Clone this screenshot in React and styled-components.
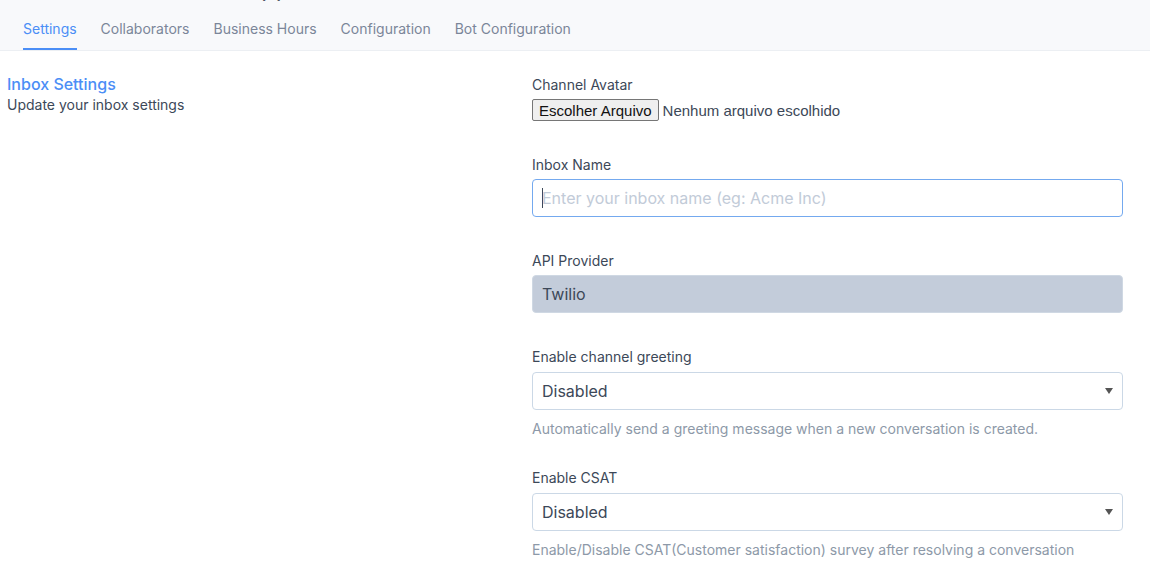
import styled, { createGlobalStyle } from 'styled-components';

const GlobalStyle = createGlobalStyle`
  body {
    margin: 0;
    background: #ffffff;
    font-family: Inter, Roboto, "Liberation Sans", sans-serif;
    color: #3c4858;
  }
  * { box-sizing: border-box; }
`;

const Header = styled.header`
  background: #f8f9fb;
  border-bottom: 1px solid #eceff3;
  padding: 0 23px;
  overflow: hidden;
`;

const Title = styled.h1`
  margin: -27px 0 0;
  font-size: 24px;
  line-height: 29px;
  font-weight: 400;
  color: #1f2d3d;
  white-space: nowrap;
`;

const Tabs = styled.nav`
  display: flex;
  gap: 24px;
  margin-top: 9px;
`;

const Tab = styled.a`
  font-size: 14px;
  line-height: 20px;
  padding: 8px 0 9px;
  color: ${p => (p.$active ? '#4b8ef6' : '#7b8699')};
  border-bottom: 2px solid ${p => (p.$active ? '#4b8ef6' : 'transparent')};
  cursor: pointer;
`;

const Body = styled.main`
  display: grid;
  grid-template-columns: 525px 591px;
  padding: 25px 0 0 7px;
`;

const Intro = styled.div`
  margin-top: -2px;
`;

const IntroTitle = styled.h2`
  margin: 0;
  font-size: 16px;
  line-height: 20px;
  font-weight: 500;
  color: #4b8ef6;
`;

const IntroText = styled.p`
  margin: 1px 0 0;
  font-size: 14px;
  line-height: 20px;
  color: #3c4858;
`;

const Form = styled.div`
  display: flex;
  flex-direction: column;
`;

const Field = styled.div`
  display: flex;
  flex-direction: column;
  margin-bottom: ${p => p.$gap || 35}px;
`;

const Label = styled.label`
  font-size: 14px;
  line-height: 18px;
  color: #3c4858;
  margin-bottom: 5px;
`;

const FileRow = styled.div`
  display: flex;
  align-items: center;
  gap: 4px;
  font-family: "Liberation Sans", Arial, sans-serif;
  font-size: 15px;
  color: #3c4858;
`;

const FileButton = styled.button`
  font-family: "Liberation Sans", Arial, sans-serif;
  font-size: 15px;
  height: 22px;
  padding: 0 6px;
  background: #efefef;
  border: 1px solid #767676;
  border-radius: 2px;
  color: #111;
`;

const Input = styled.input`
  height: 38px;
  width: 100%;
  padding: 0 9px;
  font-family: Inter, Roboto, "Liberation Sans", sans-serif;
  font-size: 16px;
  color: #3c4858;
  border-radius: 4px;
  border: 1px solid #cfd8e3;
  background: ${p => (p.disabled ? '#c3ccda' : '#ffffff')};
  outline: none;
  &:disabled { color: #3c4858; }
`;

const Caret = styled.span`
  display: inline-block;
  width: 1px;
  height: 20px;
  background: #3c4858;
  margin-right: -1px;
`;

const FakeInput = styled.div`
  height: 38px;
  display: flex;
  align-items: center;
  padding: 0 9px;
  font-size: 16px;
  color: #c2cbd8;
  border-radius: 4px;
  border: 1px solid #74a9ef;
  background: #fff;
`;

const SelectWrap = styled.div`
  position: relative;
  margin-top: 1px;
`;

const Select = styled.select`
  appearance: none;
  width: 100%;
  height: 38px;
  padding: 0 9px;
  font-family: Inter, Roboto, "Liberation Sans", sans-serif;
  font-size: 16px;
  color: #3c4858;
  background: #fff;
  border: 1px solid #cbd8e6;
  border-radius: 4px;
  outline: none;
`;

const Arrow = styled.span`
  position: absolute;
  right: 10px;
  top: 16px;
  width: 0;
  height: 0;
  border-left: 4px solid transparent;
  border-right: 4px solid transparent;
  border-top: 6px solid #555;
  pointer-events: none;
`;

const Help = styled.p`
  margin: 9px 0 0;
  font-size: 14px;
  line-height: 20px;
  color: #8d99a8;
`;

function DisabledSelect({ label, help }) {
  return (
    <Field $gap={30}>
      <Label>{label}</Label>
      <SelectWrap>
        <Select defaultValue="disabled">
          <option value="enabled">Enabled</option>
          <option value="disabled">Disabled</option>
        </Select>
        <Arrow />
      </SelectWrap>
      <Help>{help}</Help>
    </Field>
  );
}

export default function App() {
  const tabs = ['Settings', 'Collaborators', 'Business Hours', 'Configuration', 'Bot Configuration'];
  return (
    <>
      <GlobalStyle />
      <Header>
        <Title>Twilio Inbox (WhatsApp Business Account)</Title>
        <Tabs>
          {tabs.map((t, i) => (
            <Tab key={t} $active={i === 0}>{t}</Tab>
          ))}
        </Tabs>
      </Header>
      <Body>
        <Intro>
          <IntroTitle>Inbox Settings</IntroTitle>
          <IntroText>Update your inbox settings</IntroText>
        </Intro>
        <Form>
          <Field>
            <Label>Channel Avatar</Label>
            <FileRow>
              <FileButton>Escolher Arquivo</FileButton>
              <span>Nenhum arquivo escolhido</span>
            </FileRow>
          </Field>
          <Field>
            <Label>Inbox Name</Label>
            <FakeInput>
              <Caret />
              Enter your inbox name (eg: Acme Inc)
            </FakeInput>
          </Field>
          <Field>
            <Label>API Provider</Label>
            <Input disabled value="Twilio" readOnly />
          </Field>
          <DisabledSelect
            label="Enable channel greeting"
            help="Automatically send a greeting message when a new conversation is created."
          />
          <DisabledSelect
            label="Enable CSAT"
            help="Enable/Disable CSAT(Customer satisfaction) survey after resolving a conversation"
          />
        </Form>
      </Body>
    </>
  );
}
